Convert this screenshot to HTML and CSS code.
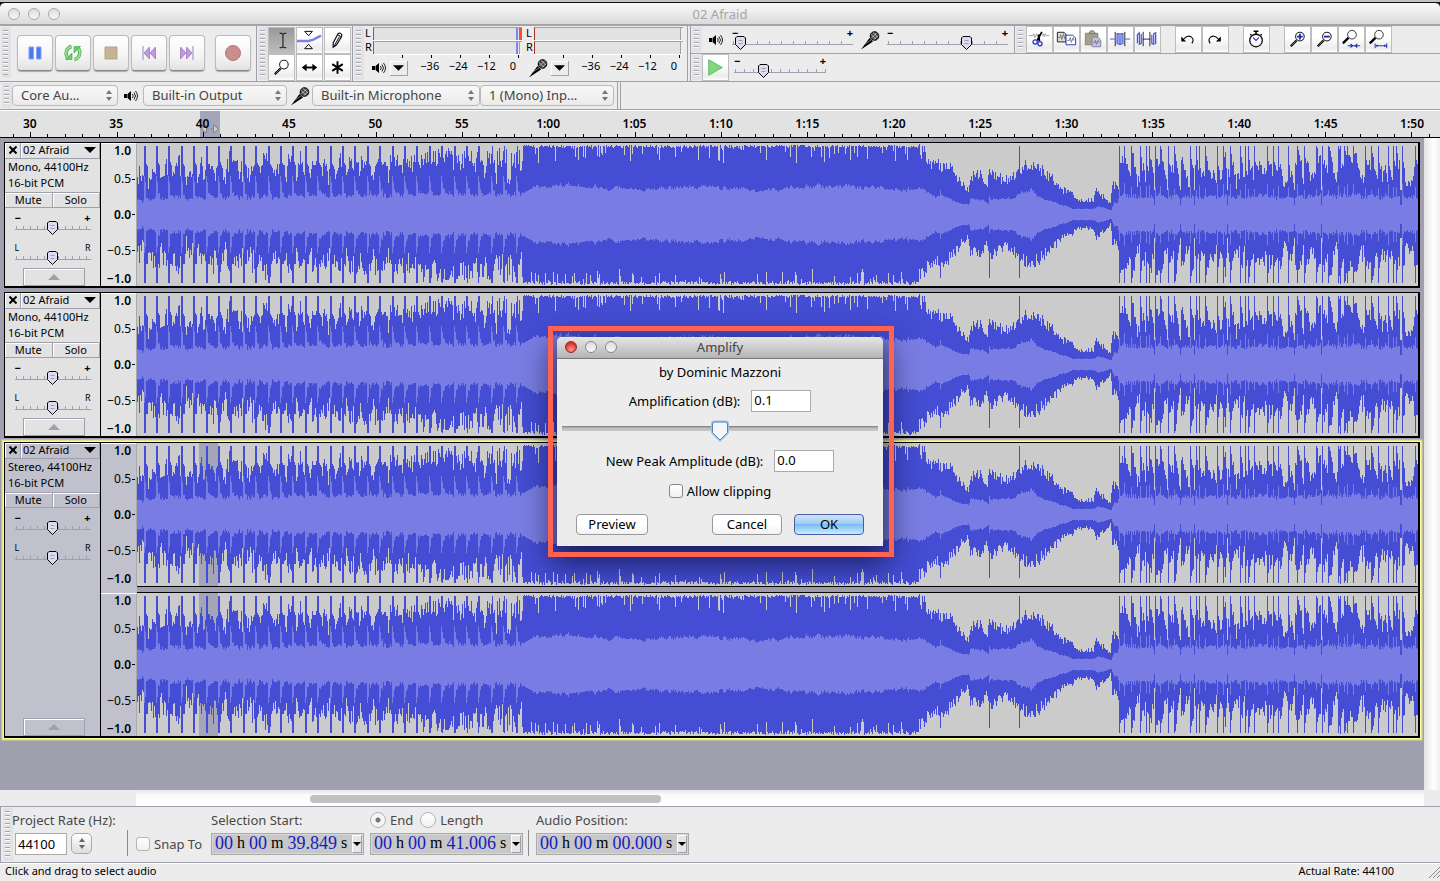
FILE: index.html
```html
<!DOCTYPE html>
<html lang="en">
<head>
<meta charset="utf-8">
<title>02 Afraid</title>
<link rel="stylesheet" href="styles.css">
</head>
<body>
<svg class="defs" aria-hidden="true">
  <symbol id="speaker" viewBox="0 0 14 14"><path d="M0 5h3v4H0zM3.500 5L7 2v10L3.500 9z" fill="#000"/><path d="M8.500 5q1.500 2 0 4M10 3.500q3 3.500 0 7M11.500 2q4 5 0 10" fill="none" stroke="#222"/></symbol>
  <symbol id="mic" viewBox="0 0 20 20"><path d="M1 19.500L9.500 8l3.500 3.500z" fill="#000"/><path d="M5 14l6-4" stroke="#999" stroke-width=".8"/><circle cx="14.500" cy="6" r="4.300" fill="#444" stroke="#000"/><path d="M11 4.500l5 4.500M13 2.500l5 4.500M11.500 8l5-5M14 9.500l4-4" stroke="#ccc" stroke-width=".8"/></symbol>
  <symbol id="lens" viewBox="0 0 26 26"><path d="M6 20l6-6" stroke="#000" stroke-width="2.400"/><path d="M6.500 19.500l5-5" stroke="#aaa" stroke-width=".6"/><circle cx="15.500" cy="10" r="4.500" fill="#fff" stroke="#222" stroke-width="1.100"/></symbol>
  <symbol id="updown" viewBox="0 0 6 12"><path d="M3 0l3 4H0zM0 7h6l-3 4z" fill="currentColor"/></symbol>
  <symbol id="down" viewBox="0 0 12 6"><path d="M0 0h12L6 6z" fill="#000"/></symbol>
  <symbol id="up" viewBox="0 0 12 6"><path d="M6 0l6 6H0z" fill="#9f9fae"/></symbol>
  <symbol id="cross" viewBox="0 0 8 8"><path d="M.5 .5l7 7M7.500 .5l-7 7" stroke="#000" stroke-width="2"/></symbol>
</svg>

<main class="window">
  <header class="titlebar">
    <div class="lights"><i></i><i></i><i></i></div>
    <h1>02 Afraid</h1>
  </header>

  <div class="dock">
    <section class="bar transport" aria-label="Transport">
      <span class="grip"></span>
      <button class="round" aria-label="Pause"><svg viewBox="0 0 20 20"><path d="M4 4h4.500v12H4zM11.500 4H16v12h-4.500z" fill="#4f78ea" stroke="#86a3f4"/></svg></button>
      <button class="round" aria-label="Loop"><svg viewBox="0 0 20 20"><path d="M8.500 3.500a7 7 0 0 0-3 12M11.500 16.500a7 7 0 0 0 3-12" fill="none" stroke="#4caf50" stroke-width="3.400"/><path d="M8.500 3.500a7 7 0 0 0-3 12M11.500 16.500a7 7 0 0 0 3-12" fill="none" stroke="#8fe08f" stroke-width="2"/><path d="M2.500 16.500H9V10zM17.500 3.500H11V10z" fill="#6cce6c" stroke="#3f9f46" stroke-width=".6"/></svg></button>
      <button class="round" aria-label="Stop"><svg viewBox="0 0 20 20"><path d="M4 4h12v12H4z" fill="#c5b393" stroke="#b5a482"/></svg></button>
      <button class="round" aria-label="Skip to start"><svg viewBox="0 0 20 20"><path d="M4 3v14" stroke="#a77fcb"/><path d="M10.500 4v12L5 10zM16.500 4v12L11 10z" fill="#bd9ae0" stroke="#9a76c2" stroke-width=".8"/></svg></button>
      <button class="round" aria-label="Skip to end"><svg viewBox="0 0 20 20"><path d="M16 3v14" stroke="#a77fcb"/><path d="M3.500 4v12L9 10zM9.500 4v12l5.500-6z" fill="#bd9ae0" stroke="#9a76c2" stroke-width=".8"/></svg></button>
      <button class="round record" aria-label="Record"><svg viewBox="0 0 20 20"><circle cx="10" cy="10" r="7.500" fill="#ca8e8e" stroke="#b77575"/></svg></button>
    </section>

    <section class="bar tools" aria-label="Tools">
      <span class="grip"></span>
      <div class="toolgrid">
        <button class="tile pressed" aria-label="Selection"><svg viewBox="0 0 26 26"><path d="M11 5.500h2.500l1 1 1-1H18M14.500 6v14M11 20.500h2.500l1-1 1 1H18" fill="none" stroke="#000"/></svg></button>
        <button class="tile" aria-label="Envelope"><svg viewBox="0 0 26 26"><path d="M0 13.500h12l5-1.500 8-4" fill="none" stroke="#7b81ea" stroke-width="2.500"/><path d="M8 3.500h8L12 8zM8 21.500h8L12 17z" fill="#fff" stroke="#000"/></svg></button>
        <button class="tile" aria-label="Draw"><svg viewBox="0 0 26 26"><path d="M8.500 20v-4.500l5-9.500q2-2 4 1l-.5 2.500-5 8z" fill="#fff" stroke="#000" stroke-width="1.200"/><path d="M13 7l3.500 2M15 9l-4.500 8M8.500 20l2-3" stroke="#000"/></svg></button>
        <button class="tile" aria-label="Zoom"><svg viewBox="0 0 26 26"><use href="#lens"/></svg></button>
        <button class="tile" aria-label="Time shift"><svg viewBox="0 0 26 26"><path d="M7 13h12" stroke="#000" stroke-width="2"/><path d="M5 13l5-4v8zM21 13l-5-4v8z"/></svg></button>
        <button class="tile" aria-label="Multi"><svg viewBox="0 0 26 26"><path d="M13 6.500v13M7.500 9.500l11 7M18.500 9.500l-11 7" stroke="#000" stroke-width="2"/></svg></button>
      </div>
    </section>

    <section class="bar meters" aria-label="Meters">
      <span class="grip"></span>
      <div class="meter out">
        <div class="chan"><b>L</b><span class="level"><i class="hot"></i><i class="clip"></i></span></div>
        <div class="chan"><b>R</b><span class="level"><i class="hot"></i><i class="edge"></i></span></div>
        <div class="ticks"><i></i><i></i><i></i><i></i><i></i></div>
        <div class="scale"><svg class="snd"><use href="#speaker"/></svg><button class="drop" aria-label="Output options"><svg><use href="#down"/></svg></button><span>−36</span><span>−24</span><span>−12</span><span class="zero">0</span></div>
      </div>
      <div class="meter in">
        <div class="chan"><b>L</b><span class="level"><i class="edge"></i></span></div>
        <div class="chan"><b>R</b><span class="level"><i class="edge"></i></span></div>
        <div class="ticks"><i></i><i></i><i></i><i></i><i></i></div>
        <div class="scale"><svg class="micro"><use href="#mic"/></svg><button class="drop" aria-label="Input options"><svg><use href="#down"/></svg></button><span>−36</span><span>−24</span><span>−12</span><span class="zero">0</span></div>
      </div>
    </section>

    <div class="stack">
      <div class="line">
        <section class="bar mixer" aria-label="Mixer">
          <span class="grip"></span>
          <svg class="snd"><use href="#speaker"/></svg>
          <label class="fader"><span>−</span><span>+</span><input type="range" value="3" aria-label="Output volume"></label>
          <svg class="micro"><use href="#mic"/></svg>
          <label class="fader"><span>−</span><span>+</span><input type="range" value="67" aria-label="Input volume"></label>
        </section>
        <section class="bar edit" aria-label="Edit">
          <span class="grip"></span>
          <div class="group">
            <button class="tile" aria-label="Cut"><svg viewBox="0 0 26 26"><path d="M2 9h4l1-2 1 4 2-4 1 3 1-2M16 9l1-2 1 3 1-3 1 2h3" fill="none" stroke="#999"/><path d="M15.500 5l-5 9M12 8l1 7" stroke="#000" stroke-width="1.800"/><circle cx="8.500" cy="15.500" r="2.200" fill="none" stroke="#2637c8" stroke-width="1.300"/><circle cx="13.500" cy="17.500" r="2.200" fill="none" stroke="#2637c8" stroke-width="1.300"/></svg></button>
            <button class="tile" aria-label="Copy"><svg viewBox="0 0 26 26"><path d="M3.500 5.500h7l2 2v8h-9z" fill="#ddd" stroke="#222"/><path d="M4 11h2l1-3 1 5 2-6 1 5h1" fill="none" stroke="#777"/><path d="M12.500 8.500h7l3 3v7h-10z" fill="#fff" stroke="#2637c8"/><path d="M14 14h2l1-3 1 5 2-5 1 3" fill="none" stroke="#777"/></svg></button>
            <button class="tile" aria-label="Paste"><svg viewBox="0 0 26 26"><path d="M4.500 6.500h13v12h-13z" fill="#a5a184" stroke="#87846c"/><path d="M8 7l2-3h3l2 3z" fill="#aaa" stroke="#777"/><path d="M11.500 10.500h6l3 3v7h-9z" fill="#c4c4d2" stroke="#8080b4"/><path d="M13 16h1l1-2 1 4 2-4 1 2" fill="none" stroke="#777"/></svg></button>
            <button class="tile" aria-label="Trim"><svg viewBox="0 0 26 26"><path d="M2 12.500h5M18 12.500h5" stroke="#4654dd"/><path d="M9.500 18V7h2v11h2V7h2v11" fill="none" stroke="#4654dd" stroke-width="1.300"/><path d="M7.500 5v15M17.500 5v15" stroke="#222"/></svg></button>
            <button class="tile" aria-label="Silence"><svg viewBox="0 0 26 26"><path d="M2.500 17V8l2-2v12l2-1V7M8 12.500h8M17.500 8v9l2 1V7l2-1v12" fill="none" stroke="#4654dd" stroke-width="1.300"/><path d="M8.500 5v15M15.500 5v15" stroke="#222"/></svg></button>
          </div>
          <div class="group">
            <button class="tile" aria-label="Undo"><svg viewBox="0 0 26 26"><path d="M7.500 13q4-5 8-3 4 3 1 7" fill="none" stroke="#111" stroke-width="1.200"/><path d="M5.500 10v5h5z"/></svg></button>
            <button class="tile" aria-label="Redo"><svg viewBox="0 0 26 26"><path d="M16.500 13q-4-5-8-3-4 3-1 7" fill="none" stroke="#111" stroke-width="1.200"/><path d="M18.500 10v5h-5z"/></svg></button>
          </div>
          <div class="group">
            <button class="tile" aria-label="Timer"><svg viewBox="0 0 26 26"><circle cx="12.500" cy="14" r="6.500" fill="#fff" stroke="#111" stroke-width="1.400"/><path d="M10 4.500h5M12.500 5v3M7.500 8.500l-1-1M17.500 8.500l1-1" stroke="#000" stroke-width="1.600"/><path d="M9.500 11l3 3 3-3" fill="none" stroke="#2637c8" stroke-width="1.300"/></svg></button>
          </div>
          <div class="group">
            <button class="tile" aria-label="Zoom in"><svg viewBox="0 0 26 26"><use href="#lens"/><path d="M12.500 10h6M15.500 7v6" stroke="#2230b0" stroke-width="2"/></svg></button>
            <button class="tile" aria-label="Zoom out"><svg viewBox="0 0 26 26"><use href="#lens"/><path d="M12.500 10h6" stroke="#2230b0" stroke-width="2"/></svg></button>
            <button class="tile" aria-label="Fit selection"><svg viewBox="0 0 26 26"><path d="M4 17l6-6" stroke="#000" stroke-width="2.400"/><circle cx="13.500" cy="8" r="4.500" fill="#fff" stroke="#333"/><path d="M9 19.500h13" stroke="#2230b0"/><path d="M12 17l3 2.500-3 2.500zM19 17l-3 2.500 3 2.500z" fill="#2230b0"/></svg></button>
            <button class="tile" aria-label="Fit project"><svg viewBox="0 0 26 26"><path d="M4 17l6-6" stroke="#000" stroke-width="2.400"/><circle cx="13.500" cy="8" r="4.500" fill="#fff" stroke="#333"/><path d="M9.500 17v5M21.500 17v5M10 19.500h12" stroke="#2230b0"/><path d="M10 19.500l2-1.500v3zM21 19.500l-2-1.500v3z" fill="#2230b0"/></svg></button>
          </div>
        </section>
      </div>
      <div class="line">
        <section class="bar speed" aria-label="Play at speed">
          <span class="grip"></span>
          <button class="tile" aria-label="Play at speed"><svg viewBox="0 0 26 26"><path d="M6 5l14 8-14 8z" fill="#7fd87f" stroke="#5fb862"/></svg></button>
          <label class="fader short"><span>−</span><span>+</span><input type="range" value="30" aria-label="Playback speed"></label>
        </section>
      </div>
    </div>
  </div>

  <div class="devices">
    <span class="grip"></span>
    <label class="pick host"><select aria-label="Audio host"><option>Core Au…</option></select><svg><use href="#updown"/></svg></label>
    <svg class="snd"><use href="#speaker"/></svg>
    <label class="pick output"><select aria-label="Output device"><option>Built-in Output</option></select><svg><use href="#updown"/></svg></label>
    <svg class="micro"><use href="#mic"/></svg>
    <label class="pick input"><select aria-label="Input device"><option>Built-in Microphone</option></select><svg><use href="#updown"/></svg></label>
    <label class="pick inputs"><select aria-label="Input channels"><option>1 (Mono) Inp…</option></select><svg><use href="#updown"/></svg></label>
    <span class="dockend"></span>
  </div>

  <div class="ruler">
    <div class="times"><span>30</span><span>35</span><span>40</span><span>45</span><span>50</span><span>55</span><span>1:00</span><span>1:05</span><span>1:10</span><span>1:15</span><span>1:20</span><span>1:25</span><span>1:30</span><span>1:35</span><span>1:40</span><span>1:45</span><span>1:50</span></div>
    <div class="marks" id="marks"></div>
    <div class="rulersel"><svg viewBox="0 0 18 10"><path d="M.5 5l5-4v8zM17.500 5l-5-4v8zM5 5h3M10 5h3" fill="#ccc" stroke="#85858f"/></svg></div>
  </div>

  <div class="workspace">
    <div class="tracks">
      <article class="track">
        <div class="panel">
          <div class="head"><button aria-label="Close track"><svg><use href="#cross"/></svg></button><button class="name">02 Afraid<svg><use href="#down"/></svg></button></div>
          <p>Mono, 44100Hz<br>16-bit PCM</p>
          <div class="toggles"><button>Mute</button><button>Solo</button></div>
          <label class="fader mini"><span>−</span><span>+</span><input type="range" value="50" aria-label="Gain"></label>
          <label class="fader mini pan"><span>L</span><span>R</span><input type="range" value="50" aria-label="Pan"></label>
          <button class="fold" aria-label="Collapse"><svg><use href="#up"/></svg></button>
        </div>
        <div class="channels">
          <div class="channel"><div class="vruler"><b>1.0</b><span class="t">0.5</span><b class="t">0.0</b><span class="t">−0.5</span><b>−1.0</b></div><svg class="wave"></svg></div>
        </div>
      </article>
      <article class="track">
        <div class="panel">
          <div class="head"><button aria-label="Close track"><svg><use href="#cross"/></svg></button><button class="name">02 Afraid<svg><use href="#down"/></svg></button></div>
          <p>Mono, 44100Hz<br>16-bit PCM</p>
          <div class="toggles"><button>Mute</button><button>Solo</button></div>
          <label class="fader mini"><span>−</span><span>+</span><input type="range" value="50" aria-label="Gain"></label>
          <label class="fader mini pan"><span>L</span><span>R</span><input type="range" value="50" aria-label="Pan"></label>
          <button class="fold" aria-label="Collapse"><svg><use href="#up"/></svg></button>
        </div>
        <div class="channels">
          <div class="channel"><div class="vruler"><b>1.0</b><span class="t">0.5</span><b class="t">0.0</b><span class="t">−0.5</span><b>−1.0</b></div><svg class="wave"></svg></div>
        </div>
      </article>
      <article class="track selected">
        <div class="panel">
          <div class="head"><button aria-label="Close track"><svg><use href="#cross"/></svg></button><button class="name">02 Afraid<svg><use href="#down"/></svg></button></div>
          <p>Stereo, 44100Hz<br>16-bit PCM</p>
          <div class="toggles"><button>Mute</button><button>Solo</button></div>
          <label class="fader mini"><span>−</span><span>+</span><input type="range" value="50" aria-label="Gain"></label>
          <label class="fader mini pan"><span>L</span><span>R</span><input type="range" value="50" aria-label="Pan"></label>
          <button class="fold" aria-label="Collapse"><svg><use href="#up"/></svg></button>
        </div>
        <div class="channels">
          <div class="channel"><div class="vruler"><b>1.0</b><span class="t">0.5</span><b class="t">0.0</b><span class="t">−0.5</span><b>−1.0</b></div><svg class="wave"></svg></div>
          <div class="channel"><div class="vruler"><b>1.0</b><span class="t">0.5</span><b class="t">0.0</b><span class="t">−0.5</span><b>−1.0</b></div><svg class="wave"></svg></div>
        </div>
      </article>
    </div>
    <div class="vscroll"></div>
  </div>
  <div class="hscroll"><div class="rail"><i></i></div></div>

  <footer class="selection">
    <span class="grip"></span>
    <div class="col rate">
      <label for="rate">Project Rate (Hz):</label>
      <div class="field"><input id="rate" type="text" value="44100"><button class="stepper" aria-label="Change rate"><svg><use href="#updown"/></svg></button></div>
    </div>
    <div class="col snap"><label class="check"><input type="checkbox">Snap To</label></div>
    <div class="col start">
      <span>Selection Start:</span>
      <div class="clock"><b>00</b><i>h</i><b>00</b><i>m</i><b>39.849</b><i>s</i><button aria-label="Time format"><svg><use href="#down"/></svg></button></div>
    </div>
    <div class="col end">
      <div class="choice"><label class="check"><input type="radio" name="mode" checked>End</label><label class="check"><input type="radio" name="mode">Length</label></div>
      <div class="clock"><b>00</b><i>h</i><b>00</b><i>m</i><b>41.006</b><i>s</i><button aria-label="Time format"><svg><use href="#down"/></svg></button></div>
    </div>
    <div class="col position">
      <span>Audio Position:</span>
      <div class="clock"><b>00</b><i>h</i><b>00</b><i>m</i><b>00.000</b><i>s</i><button aria-label="Time format"><svg><use href="#down"/></svg></button></div>
    </div>
  </footer>

  <div class="status">
    <span>Click and drag to select audio</span>
    <span class="actual">Actual Rate: 44100</span>
    <svg viewBox="0 0 12 12"><path d="M1 12L12 1M5 12l7-7M9 12l3-3" stroke="#888"/></svg>
  </div>
</main>

<div class="callout">
  <form class="dialog">
    <header><div class="lights"><i class="red"></i><i></i><i></i></div><h2>Amplify</h2></header>
    <p>by Dominic Mazzoni</p>
    <div class="row"><label for="amp">Amplification (dB):</label><input id="amp" type="text" value="0.1"></div>
    <input class="gain" type="range" aria-label="Amplification">
    <div class="row"><label for="peak">New Peak Amplitude (dB):</label><input id="peak" type="text" value="0.0"></div>
    <label class="check"><input type="checkbox">Allow clipping</label>
    <div class="actions"><button type="button">Preview</button><button type="button" class="cancel">Cancel</button><button type="button" class="ok">OK</button></div>
  </form>
</div>
<script src="wave.js"></script>
</body>
</html>
```

FILE: styles.css
```css
* { box-sizing: border-box; }
:root { --line: #9f9fae; --face: #ececec; --ui: "Noto Sans", "Open Sans", sans-serif; }
body { margin: 0; background: #c6c6c6; font: 13px/16px var(--ui); color: #000; }
button, input, select { font: inherit; color: inherit; margin: 0; }
button { padding: 0; border: 0; background: none; display: flex; align-items: center; justify-content: center; }
h1, h2, p { margin: 0; font-size: 13px; font-weight: 400; }
.defs { position: absolute; width: 0; height: 0; }
.window { height: 100vh; padding-top: 2px; display: flex; flex-direction: column; background: linear-gradient(#c4c4c4 2px, #111 2px, #111 12px, var(--face) 12px); }

.titlebar { display: grid; grid-template-columns: 1fr auto 1fr; align-items: center; height: 24px; flex: none; border-top: 1px solid #111; border-bottom: 2px solid #a3a3ab; border-radius: 5px 5px 0 0; background: linear-gradient(#fafafa, #dadada); }
.titlebar h1 { color: #a6a6a6; }
.lights { display: flex; gap: 8px; padding-left: 8px; }
.lights i { width: 12px; height: 12px; border: 1px solid #a8a8a8; border-radius: 50%; background: linear-gradient(#ddd, #f8f8f8); }

.grip { width: 10px; margin: 1px 0; flex: none; align-self: stretch; border: solid #e2e2e2; border-width: 3px 3px 3px 2px; background: repeating-linear-gradient(#a5a5b4 0 1px, #fafafa 1px 2px, #e2e2e2 2px 4px); }
.dock { display: flex; flex: none; background: var(--face); height: 56px; }
.bar { display: flex; align-items: center; border-right: 1px solid var(--line); border-bottom: 1px solid var(--line); padding-left: 1px; }
.transport { width: 257px; gap: 2px; padding-bottom: 2px; }
.transport .grip { margin-right: 4px; }
.round { width: 36px; height: 36px; border: 1px solid #bbb; border-bottom-color: #888; border-radius: 4px; background: linear-gradient(#fff, #f4f4f4 60%, #e2e2e2); box-shadow: 0 1px 1px #aaa; }
.round svg { width: 20px; height: 20px; }
.record { margin-left: 8px; }
.tools { width: 96px; }
.toolgrid { display: grid; grid-template-columns: repeat(3, 28px); grid-template-rows: repeat(2, 27px); }
.tile { width: 27px; height: 27px; border: 1px solid #bdbdbd; background: linear-gradient(#fff, #fff 40%, #ececec 85%, #fff); flex: none; }
.tile svg { width: 25px; height: 25px; flex: none; }
.pressed { background: linear-gradient(#999, #bdbdbd); }
.meters { width: 338px; align-items: stretch; box-shadow: inset -2px 0 var(--face), inset -3px 0 var(--line); }
.meter { width: 161px; padding-left: 1px; }
.chan { display: flex; height: 14px; font-size: 11px; line-height: 14px; }
.chan b { width: 8px; font-weight: 400; }
.level { display: flex; justify-content: flex-end; gap: 1px; height: 13px; margin-top: 1px; flex: 1; margin-right: 3px; background: #e2e2e2; border-top: 1px solid var(--line); border-left: 1px solid #2f8f3a; box-shadow: 0 1px #fff; }
.in .level { border-left-color: #a03030; }
.level .hot { width: 2px; background: #7b86f5; }
.level .clip { width: 3px; background: #ff4a3a; }
.level .edge { width: 3px; border-left: 1px solid var(--line); background: #eee; }
.ticks { display: flex; gap: 28px; padding: 1px 0 0 37px; height: 4px; }
.ticks i { width: 1px; height: 3px; background: #000; flex: none; }
.scale { display: flex; align-items: center; height: 20px; padding-left: 7px; font-size: 11px; line-height: 14px; }
.scale span { width: 29px; text-align: center; padding-bottom: 5px; }
.scale .zero { width: 25px; }
.scale .drop { margin-right: 8px; }
.snd { width: 14px; height: 14px; flex: none; }
.micro { width: 20px; height: 20px; flex: none; }
.drop { width: 18px; height: 15px; margin-left: 4px; border: solid var(--line); border-width: 0 1px 1px 0; box-shadow: inset 1px 1px #fff; }
.drop svg { width: 11px; height: 6px; }
.in .scale { padding-left: 2px; }
.in .drop { margin-left: 3px; }
.stack { flex: 1; min-width: 0; }
.line { display: flex; height: 28px; border-bottom: 1px solid var(--line); }
.line .bar { border-bottom: 0; }
.mixer { width: 324px; gap: 7px; }
.mixer .snd { margin-right: 2px; }
.fader { display: grid; grid-template-columns: 1fr auto; grid-template-rows: 6px 14px; width: 121px; font: bold 11px/6px var(--ui); --step: 12px; }
.fader input { grid-column: 1 / 3; width: 100%; height: 14px; appearance: none; background: linear-gradient(var(--line), var(--line)) 0 8px / 100% 1px no-repeat, linear-gradient(90deg, var(--line) 1px, transparent 1px) 1px 5px / var(--step) 3px repeat-x; }
.fader input::-webkit-slider-thumb { appearance: none; width: 11px; height: 14px; background: url("data:image/svg+xml,%3Csvg xmlns='http://www.w3.org/2000/svg' viewBox='0 0 11 14'%3E%3Cpath d='M2 .5h7l1.500 1.500v6.500l-5 5-5-5V2z' fill='%23dcdcf0' stroke='%23000'/%3E%3Cpath d='M3.500 4.500h4M3.500 7.500h4' stroke='%239f9fae'/%3E%3C/svg%3E"); }
.edit { border-right: 0; gap: 14px; }
.edit .grip { margin-right: -14px; }
.group { display: flex; }
.speed { border-right: 0; }
.short { width: 92px; margin-left: 5px; --step: 9px; }

.devices { display: flex; align-items: center; height: 28px; flex: none; padding-left: 2px; background: var(--face); border-bottom: 1px solid var(--line); }
.pick { display: flex; align-items: center; position: relative; flex: none; }
.pick select { appearance: none; width: 100%; height: 21px; padding: 0 24px 0 8px; border: 1px solid #b9b9b9; border-radius: 4px; background: linear-gradient(#f8f8f8, #ebebeb); color: #444; line-height: 19px; }
.pick svg { position: absolute; right: 6px; width: 6px; height: 12px; color: #777; pointer-events: none; }
.host { width: 106px; margin-right: 6px; }
.output { width: 144px; margin: 0 3px 0 5px; }
.input { width: 168px; margin-left: 2px; }
.inputs { width: 134px; }
.dockend { width: 4px; margin-left: 3px; align-self: stretch; border: solid var(--line); border-width: 0 1px; }

.ruler { position: relative; height: 28px; flex: none; background: #e2e2e2; border-top: 1px solid #fff; border-bottom: 1px solid #000; overflow: hidden; display: flex; flex-direction: column; justify-content: space-between; }
.times { display: grid; grid-template-columns: repeat(17, 6%); width: 100%; margin-left: -1%; padding-top: 5px; font: 600 12px/16px var(--ui); text-align: center; position: relative; z-index: 1; }
.times span { padding-left: 2px; }
.marks { display: grid; grid-template-columns: repeat(83, 1.2%); width: 100%; margin-left: 0.9%; height: 5px; align-items: end; position: relative; z-index: 1; }
.marks i { height: 3px; border-left: 1px solid #000; }
.marks i:nth-child(5n + 2) { height: 5px; }
.rulersel { position: absolute; left: 200px; top: 0; bottom: 0; width: 20px; background: #a5a5b9; display: flex; align-items: end; justify-content: center; padding-bottom: 3px; }
.rulersel svg { width: 18px; height: 10px; }

.workspace { display: flex; flex: 1; min-height: 0; background: var(--line); }
.tracks { flex: 1; min-width: 0; padding: 4px; display: flex; flex-direction: column; gap: 4px; }
.vscroll { width: 16px; background: linear-gradient(90deg, #e4e4e4, #fff 60%, #f0f0f0); }
.track { display: flex; border: solid #000; border-width: 1px 2px 2px 1px; background: #e2e2e2; }
.selected { background: #c1c1cd; box-shadow: 0 0 0 1px #ffff9c, 0 0 0 2px #e6e28c, 0 0 0 3px #bdbda0; }
.panel { width: 96px; flex: none; border-right: 1px solid #000; display: flex; flex-direction: column; align-items: center; font-size: 11px; }
.head, .toggles { display: flex; align-self: stretch; height: 16px; flex: none; line-height: 14px; }
.head button, .toggles button { border: solid var(--line); border-width: 0 1px 1px 0; box-shadow: inset 1px 1px #fff; padding-bottom: 1px; }
.head button { width: 16px; }
.head button svg { width: 8px; height: 8px; }
.head .name { flex: 1; justify-content: space-between; padding: 0 3px 2px 2px; }
.head .name svg { width: 12px; height: 6px; }
.panel p { align-self: stretch; height: 33px; padding-left: 3px; font-size: 11px; line-height: 16px; }
.toggles button { flex: 1; border-top-width: 1px; }
.mini { width: 76px; margin-top: 7px; --step: 7px; }
.pan { margin-top: 10px; font-weight: 400; font-size: 9px; }
.fold { width: 62px; height: 18px; margin-top: auto; border: 1px solid var(--line); box-shadow: inset 1px 1px #fff; margin-left: 2px; }
.fold svg { width: 12px; height: 6px; }
.channels { flex: 1; min-width: 0; display: flex; flex-direction: column; gap: 7px; }
.channel { display: flex; height: 143px; }
.vruler { width: 36px; flex: none; display: grid; grid-template-rows: 13px 44px 27px 45px 11px; align-items: center; text-align: right; font-size: 12px; line-height: 14px; border-right: 1px solid #aaa; border-top: 1px solid #fff; padding-right: 5px; }
.vruler b { font-weight: 600; }
.vruler .t { margin-right: -4px; display: flex; justify-content: flex-end; align-items: center; gap: 1px; }
.vruler .t::after { content: ""; width: 3px; height: 1px; background: #000; }
.wave { display: block; flex: 1; min-width: 0; height: 143px; background: #cbcbcb; }
.selected .wave { background: linear-gradient(90deg, transparent 62px, #a5a5b9 62px, #a5a5b9 81px, transparent 81px) #cbcbcb; }
.selected .channel + .channel .wave { box-shadow: 0 -1px #000, 0 -6px var(--line), 0 -7px #000; }

.hscroll { height: 16px; flex: none; padding: 0 16px 0 136px; background: var(--face); }
.rail { height: 16px; padding: 5px 0 0 174px; background: linear-gradient(#e6e6e6, #fafafa 30%, #fff); }
.rail i { display: block; width: 31.5%; min-width: 60px; height: 8px; border-radius: 4px; background: #c1c1c1; }

.selection { display: flex; flex: none; height: 57px; padding-left: 2px; border: solid var(--line); border-width: 1px 0 1px 1px; background: var(--face); color: #484848; }
.col { display: flex; flex-direction: column; gap: 5px; padding-top: 5px; }
.rate { width: 115px; }
.selection .grip { margin-right: -1px; }
.field { display: flex; gap: 4px; padding-left: 3px; color: #000; }
.field input { width: 52px; height: 22px; padding: 0 2px 1px; border: 1px solid #aaa; background: #fff; }
.stepper { width: 21px; height: 21px; border: 1px solid #aaa; border-radius: 5px; background: linear-gradient(#fff, #ddd); color: #666; }
.stepper svg { width: 6px; height: 12px; }
.snap { margin: 23px 0 6px; padding: 4px 0 0 8px; width: 84px; border-left: 1px solid #888; }
.check { display: flex; align-items: center; gap: 4px; height: 20px; white-space: nowrap; }
.check input { appearance: none; width: 14px; height: 14px; border: 1px solid #b4b4b4; border-radius: 3px; background: linear-gradient(#fff, #f0f0f0); }
.check input[type=radio] { width: 16px; height: 16px; border-radius: 50%; }
.check input[type=radio]:checked { background: radial-gradient(circle, #777 2px, #f4f4f4 3px); }
.choice { display: flex; gap: 7px; height: 16px; }
.choice .check { height: 16px; }
.start { width: 159px; }
.end { width: 158px; }
.position { position: relative; padding-left: 8px; }
.position::before { content: ""; position: absolute; left: 0; top: 23px; bottom: 6px; border-left: 1px solid #888; }
.clock { display: flex; align-items: center; gap: 4px; width: 153px; height: 22px; padding: 0 1px 2px 3px; border: 1px solid #a9a9a9; outline: 1px solid #d8d8d8; outline-offset: -2px; background: #c7c7c7; font: 18px/18px "Liberation Serif", serif; color: #000; }
.clock b { font-weight: 400; color: #1420c0; }
.clock i { font-style: normal; font-size: 16px; }
.clock button { width: 10px; height: 18px; margin-left: auto; margin-top: 2px; flex: none; background: #e6e6e6; border: 1px solid #fff; border-right-color: var(--line); border-bottom-color: var(--line); }
.clock svg { width: 8px; height: 4px; flex: none; }

.status { display: flex; align-items: center; height: 18px; flex: none; padding: 0 0 3px 5px; border-top: 1px solid #fff; background: var(--face); font-size: 11px; }
.actual { margin-left: auto; margin-right: 34px; }
.status svg { width: 12px; height: 12px; align-self: end; }

.callout { position: absolute; top: 37%; left: calc(50% - 172px); padding: 11px 11px 11px 9px; }
.callout::after { content: ""; position: absolute; inset: 0; border: 5px solid #fd6350; pointer-events: none; }
.dialog { width: 326px; padding-bottom: 11px; display: flex; flex-direction: column; align-items: center; background: var(--face); border-radius: 5px 5px 0 0; box-shadow: 0 12px 30px 6px rgba(0, 0, 20, .6); }
.dialog header { align-self: stretch; display: grid; grid-template-columns: 1fr auto 1fr; align-items: center; height: 22px; border-radius: 5px 5px 0 0; border-bottom: 1px solid #777; background: linear-gradient(#e6e6e6, #b4b4b4); color: #444; }
.dialog .lights i { border-color: #888; }
.dialog .lights .red { background: radial-gradient(circle at 50% 75%, #ff9a90, #d8302a 70%); border-color: #8d2a26; }
.dialog p { margin: 5px 0 10px; line-height: 16px; }
.row { display: flex; align-items: center; gap: 11px; height: 22px; }
.row input { width: 60px; height: 22px; padding: 0 2px 2px; border: 1px solid #a9a9a9; background: #fff; }
.gain { appearance: none; width: 316px; height: 22px; margin: 8px 0; background: linear-gradient(#777, #bbb 40%, #c8c8c8) 0 6px / 100% 5px no-repeat; border-radius: 3px; }
.gain::-webkit-slider-thumb { appearance: none; width: 20px; height: 22px; background: url("data:image/svg+xml,%3Csvg xmlns='http://www.w3.org/2000/svg' viewBox='0 0 20 22'%3E%3Cpath d='M4.500 2h11q2 0 2 2v8.500L10 20l-7.500-7.500V4q0-2 2-2z' fill='%23f2f6fb' stroke='%239cc3ec' stroke-width='3'/%3E%3Cpath d='M4.500 2h11q2 0 2 2v8.500L10 20l-7.500-7.500V4q0-2 2-2z' fill='%23f4f6fa' stroke='%234f86bd'/%3E%3C/svg%3E"); }
.dialog .check { margin: 9px 0 13px; }
.dialog .check input { border-color: #888; }
.actions { align-self: stretch; display: flex; padding: 0 19px; gap: 12px; }
.actions button { width: 70px; height: 21px; border: 1px solid #999; border-radius: 4px; background: linear-gradient(#fff, #fff 50%, #f1f1f1); }
.actions button:first-child { width: 72px; }
.actions .cancel { margin-left: auto; }
.actions .ok { border-color: #4c5ca4; background: linear-gradient(#cfe4fa, #9fcaf5 48%, #7dbaf4 50%, #c4f0ff); }
```

FILE: wave.js
```js
// Tick marks of the time ruler.
document.getElementById('marks').innerHTML = '<i></i>'.repeat(83);

const W = 1281, H = 143, MID = 71.5;

// Piecewise-linear lookup in a list of [x, value] points.
function at(points, x) {
  for (let i = 1; i < points.length; i++) {
    if (x <= points[i][0]) {
      const [x0, a] = points[i - 1], [x1, b] = points[i];
      return a + (b - a) * (x - x0) / (x1 - x0 || 1);
    }
  }
  return points[points.length - 1][1];
}

const peakFade = [[763,.97],[781,.97],[788,.82],[797,.68],[806,.72],[815,.62],[823,.45],[831,.33],[833,.54],[844,.58],[849,.4],[853,.62],[866,.48],[874,.5],[883,.66],[894,.74],[900,.68],[915,.5],[925,.35],[936,.28],[939,.2],[956,.2],[959,.34],[966,.25],[973,.15],[975,.42],[981,.42]];
const rmsFade = [[763,.38],[781,.4],[797,.25],[804,.27],[822,.16],[831,.14],[833,.22],[846,.2],[851,.15],[853,.22],[877,.23],[882,.3],[895,.35],[900,.25],[911,.2],[925,.13],[936,.08],[956,.08],[961,.12],[974,.06],[977,.17],[981,.15]];
const hits = [635,651,672,698,714,724,741,755,779,796,814,842,860,869,886,921,938,957,986,1003,1011,1028,1067,1082,1099,1127,1143,1153,1174,1209,1226,1243,1273,1290,1299,1315,1350,1367,1389,1416,1432,1440,1459,1496].map(v => Math.round(763 + v / 2.904));
const dips = [738,812,855,950,1145,1222,1452,1456].map(v => Math.round(763 + v / 2.904));

function levels(seed) {
  let s = seed, drift = 0;
  const rnd = () => (s = (s * 16807) % 2147483647) / 2147483647;
  const out = [];
  for (let x = 0; x < W; x++) {
    let up, down, rms;
    drift = drift * .7 + (rnd() - .5) * .2;
    if (x < 386) {
      const phase = (x - 6 + 124) % 12.4;
      const base = .5 + .16 * (x / 386) + .05 * Math.sin(x / 16) + drift;
      const swell = phase > 7 ? .08 : 0;
      up = Math.min(.9, base + swell + (rnd() - .4) * .24);
      down = Math.min(.92, base + swell + (rnd() - .4) * .26);
      rms = .2 + .07 * (x / 386) + drift * .2 + rnd() * .05;
      if (phase < 2) { up = .97; down = .97; rms = phase < 1 ? .54 : .46; }
      else if (phase < 4) { up = Math.max(up, .8 - phase * .03); down = Math.max(down, .7); rms += .05; }
      if (x > 285) {
        if (rnd() > .84) up = .84 + rnd() * .1;
        if (rnd() > .78) down = .84 + rnd() * .12;
      }
    } else if (x < 782) {
      up = .94 + rnd() * .04;
      down = .94 + rnd() * .05;
      if (rnd() > .84) up -= rnd() * .22;
      if (rnd() > .84) down -= rnd() * .18;
      rms = .38 + .025 * Math.sin(x / 21) + drift * .22 + (rnd() - .5) * .03;
      if (x < 396) rms = .3 + (x - 386) * .008;
    } else if (x < 981) {
      const e = at(peakFade, x);
      up = e * (.84 + rnd() * .3);
      down = e * (.8 + rnd() * .28);
      rms = at(rmsFade, x) * (.93 + rnd() * .14);
      if (x === 882) { up = .96; down = .9; }
      if (x === 852 || x === 803) { down = .9; rms += .08; }
    } else {
      let near = 99;
      for (const h of hits) if (x >= h && x - h < near) near = x - h;
      const fall = Math.max(-.06, .28 - near * .06);
      up = .52 + fall + drift + rnd() * .14;
      down = .5 + fall + drift + rnd() * .18;
      rms = .23 + drift * .2 + rnd() * .05;
      if (near === 0) { up = .97; down = .96; rms = .34 + rnd() * .1; }
      if (dips.includes(x)) { up = .34; down = .33; rms = .14; }
    }
    up = Math.min(up, .99);
    down = Math.min(down, .99);
    out.push([up, down, Math.min(rms, up * .9), Math.min(rms, down * .9)]);
  }
  return out;
}

function outline(data, a, b) {
  let top = '', low = '';
  data.forEach((v, x) => { top += `V${Math.round(MID - v[a] * 71)}H${x + 1}`; });
  for (let x = W - 1; x >= 0; x--) low += `V${Math.round(MID + data[x][b] * 71)}H${x}`;
  return `M0 71${top}${low}Z`;
}

const data = levels(4211);
for (const svg of document.querySelectorAll('.wave')) {
  svg.setAttribute('viewBox', `0 0 ${W} ${H}`);
  svg.setAttribute('preserveAspectRatio', 'none');
  svg.setAttribute('shape-rendering', 'crispEdges');
  svg.innerHTML = `<path fill="#444dd3" d="${outline(data, 0, 1)}"/><path fill="#797de3" d="${outline(data, 2, 3)}"/>`;
}
```
